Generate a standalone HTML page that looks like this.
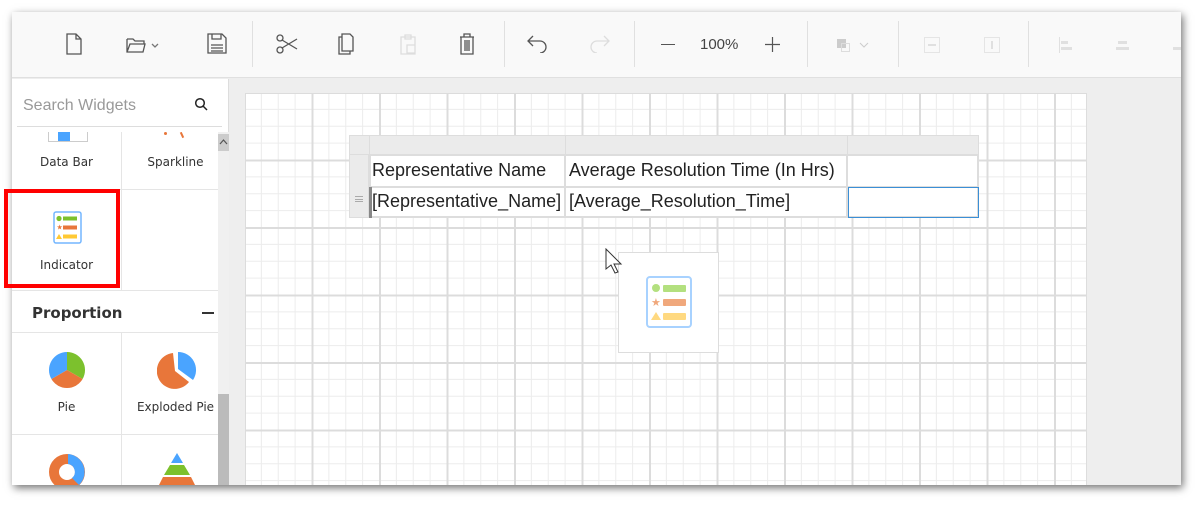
<!DOCTYPE html>
<html><head><meta charset="utf-8"><style>
*{margin:0;padding:0;box-sizing:border-box}
body{width:1201px;height:505px;background:#fff;position:relative;overflow:hidden;font-family:"Liberation Sans",sans-serif}
.app{position:absolute;left:12px;top:12px;width:1169px;height:473px;background:#eee;box-shadow:2px 3px 8px rgba(0,0,0,.55);overflow:hidden}
.tb{position:absolute;left:0;top:0;width:1169px;height:66px;background:#f9f9f9;border-bottom:1px solid #e0e0e0}
.sep{position:absolute;top:9px;width:1px;height:46px;background:#e0e0e0}
.ic{position:absolute;top:21px}
.side{position:absolute;left:0;top:67px;width:217px;height:406px;background:#fff;border-right:1px solid #ddd}
.page{position:absolute;left:233px;top:81px;width:842px;height:400px;background-color:#fff;
background-image:linear-gradient(90deg,#dcdcdc 2px,transparent 2px),linear-gradient(#dcdcdc 2px,transparent 2px),linear-gradient(90deg,#ececec 1px,transparent 1px),linear-gradient(#ececec 1px,transparent 1px);
background-size:67.5px 67.5px,67.5px 67.5px,16.875px 16.875px,16.875px 16.875px;background-position:-1px -1px;border-right:1px solid #ddd}
.cell{position:absolute;font-size:18px;color:#222;line-height:30px;padding-left:4px;white-space:nowrap}
.lbl{position:absolute;color:#333;text-align:center;width:109px;font-family:"DejaVu Sans",sans-serif;font-size:12px}
.hl{position:absolute;background:#e5e5e5}
</style></head><body>
<div class="app">
<div class="tb">
<svg class="ic" style="left:53px" width="18" height="22" viewBox="0 0 18 22" fill="none" stroke="#555" stroke-width="1.3"><path d="M2 1h9l5 5v15H2z M11 1v5h5"/></svg>
<svg class="ic" style="left:114px;top:24px" width="36" height="18" viewBox="0 0 36 18" fill="none" stroke="#555" stroke-width="1.3"><path d="M1 3h6l2 2h9v3 M1 3v13h16l2-8H4l-3 8"/><path d="M26 8l3 3 3-3" stroke="#777"/></svg>
<svg class="ic" style="left:195px" width="20" height="21" viewBox="0 0 20 21" fill="none" stroke="#555" stroke-width="1.3"><path d="M1 1h14l4 4v15H1z M5 1v5h9V1 M4 12h12 M4 15h12 M4 18h12"/></svg>
<div class="sep" style="left:240px"></div>
<svg class="ic" style="left:264px;top:22px" width="22" height="20" viewBox="0 0 22 20" fill="none" stroke="#555" stroke-width="1.3"><circle cx="4" cy="4" r="3"/><circle cx="4" cy="16" r="3"/><path d="M6 6l15 9 M6 14l15-9"/></svg>
<svg class="ic" style="left:325px" width="18" height="22" viewBox="0 0 18 22" fill="none" stroke="#555" stroke-width="1.3"><path d="M5 1h8l3 3v14H5z M5 4H2v17h11v-3"/></svg>
<svg class="ic" style="left:386px" width="20" height="22" viewBox="0 0 20 22" fill="none" stroke="#ddd" stroke-width="1.3"><path d="M3 4h14v17H3z M7 2h6v4H7z M9 12h8v8H9z"/></svg>
<svg class="ic" style="left:447px" width="16" height="22" viewBox="0 0 16 22" fill="none" stroke="#555" stroke-width="1.3"><path d="M1 4h14 M5 4V1h6v3 M2 4v17h12V4 M6 7v11 M8 7v11 M10 7v11"/></svg>
<div class="sep" style="left:492px"></div>
<svg class="ic" style="left:515px;top:23px" width="22" height="18" viewBox="0 0 22 18" fill="none" stroke="#555" stroke-width="1.3"><path d="M6 1L1 6l5 5 M1 6h12a6 6 0 0 1 0 12"/></svg>
<svg class="ic" style="left:576px;top:23px" width="22" height="18" viewBox="0 0 22 18" fill="none" stroke="#ddd" stroke-width="1.3"><path d="M16 1l5 5-5 5 M21 6H9a6 6 0 0 0 0 12"/></svg>
<div class="sep" style="left:622px"></div>
<div style="position:absolute;left:649px;top:32px;width:14px;height:1px;background:#555"></div>
<div style="position:absolute;left:688px;top:24px;font-size:15px;color:#444">100%</div>
<svg class="ic" style="left:753px;top:25px" width="15" height="15" viewBox="0 0 15 15" stroke="#555" stroke-width="1.2"><path d="M7.5 0v15 M0 7.5h15"/></svg>
<div class="sep" style="left:795px"></div>
<div style="position:absolute;left:825px;top:27px;width:9px;height:9px;background:#ccc"></div>
<div style="position:absolute;left:829px;top:31px;width:9px;height:9px;border:1px solid #ddd"></div>
<svg class="ic" style="left:847px;top:30px" width="10" height="6" viewBox="0 0 10 6" fill="none" stroke="#ccc"><path d="M1 1l4 4 4-4"/></svg>
<div class="sep" style="left:886px"></div>
<div style="position:absolute;left:912px;top:25px;width:16px;height:16px;border:1px solid #e5e5e5"><div style="position:absolute;left:3px;top:6px;width:8px;height:2px;background:#e0e0e0"></div></div>
<div style="position:absolute;left:972px;top:25px;width:16px;height:16px;border:1px solid #e5e5e5"><div style="position:absolute;left:6px;top:3px;width:2px;height:8px;background:#e0e0e0"></div></div>
<div class="sep" style="left:1016px"></div>
<div style="position:absolute;left:1047px;top:25px;width:1px;height:16px;background:#e0e0e0"></div>
<div style="position:absolute;left:1049px;top:29px;width:7px;height:3px;background:#e0e0e0"></div>
<div style="position:absolute;left:1049px;top:35px;width:11px;height:3px;background:#e0e0e0"></div>
<div style="position:absolute;left:1106px;top:29px;width:9px;height:3px;background:#e0e0e0"></div>
<div style="position:absolute;left:1104px;top:35px;width:13px;height:3px;background:#e0e0e0"></div>
<div style="position:absolute;left:1161px;top:35px;width:8px;height:3px;background:#e0e0e0"></div>
</div>
<div class="side">
<div style="position:absolute;left:11px;top:18px;font-size:16px;color:#999">Search Widgets</div>
<svg style="position:absolute;left:182px;top:18px" width="14" height="14" viewBox="0 0 14 14" fill="none" stroke="#222" stroke-width="1.5"><circle cx="6" cy="6" r="4.3"/><path d="M9 9l4 4"/></svg>
<div style="position:absolute;left:5px;top:47px;width:205px;height:1px;background:#ddd"></div>
<div style="position:absolute;left:0;top:53px;width:206px;height:353px;overflow:hidden">
 <div class="hl" style="left:109px;top:0;width:1px;height:158px"></div>
 <div style="position:absolute;left:36px;top:0;width:40px;height:10px;border:1px solid #ccc;border-top:none"><div style="position:absolute;left:9px;top:-1px;width:12px;height:10px;background:#4aa4ff"></div></div>
 <div class="lbl" style="left:0;top:23px">Data Bar</div>
 <div style="position:absolute;left:152px;top:0;width:3px;height:3px;background:#e8763a;border-radius:2px"></div>
 <div style="position:absolute;left:169px;top:0;width:2px;height:6px;background:#e8763a;transform:rotate(-25deg)"></div>
 <div class="lbl" style="left:109px;top:23px">Sparkline</div>
 <div class="hl" style="left:0;top:57px;width:206px;height:1px"></div>
 <svg style="position:absolute;left:41px;top:79px" width="29" height="33" viewBox="0 0 29 33"><rect x="1" y="1" width="27" height="31" rx="2" fill="#fff" stroke="#73b6ff" stroke-width="1.5"/><circle cx="6" cy="7.5" r="2.6" fill="#7cc12d"/><rect x="10" y="5.5" width="14" height="4" fill="#7cc12d"/><text x="3.5" y="18.5" font-size="7" fill="#e8763a">★</text><rect x="10" y="14.5" width="14" height="4" fill="#e8763a"/><path d="M3 28l3-5 3 5z" fill="#ffc933"/><rect x="10" y="23.5" width="14" height="4" fill="#ffc933"/></svg>
 <div class="lbl" style="left:0;top:126px">Indicator</div>
 <div class="hl" style="left:0;top:158px;width:206px;height:1px"></div>
 <div style="position:absolute;left:20px;top:172px;font-size:15px;font-weight:bold;color:#333;font-family:'DejaVu Sans',sans-serif">Proportion</div>
 <div style="position:absolute;left:190px;top:180px;width:12px;height:2px;background:#333"></div>
 <div class="hl" style="left:0;top:200px;width:206px;height:1px"></div>
 <div class="hl" style="left:109px;top:200px;width:1px;height:160px"></div>
 <svg style="position:absolute;left:36px;top:219px" width="38" height="38" viewBox="-19 -19 38 38"><path d="M0 0V-18A18 18 0 0 1 15.6 9z" fill="#7cc12d"/><path d="M0 0L15.6 9A18 18 0 0 1 -15.6 9z" fill="#e8763a"/><path d="M0 0L-15.6 9A18 18 0 0 1 0 -18z" fill="#4aa4ff"/></svg>
 <div class="lbl" style="left:0;top:268px">Pie</div>
 <svg style="position:absolute;left:145px;top:219px" width="40" height="38" viewBox="-19 -19 40 38"><path d="M0 0L-2 -18A18 18 0 1 0 14 11z" transform="translate(-1,1)" fill="#e8763a"/><path d="M2 -1V-18A18 18 0 0 1 17 10z" fill="#4aa4ff"/></svg>
 <div class="lbl" style="left:109px;top:268px">Exploded Pie</div>
 <div class="hl" style="left:0;top:302px;width:206px;height:1px"></div>
 <svg style="position:absolute;left:36px;top:321px" width="38" height="38" viewBox="-19 -19 38 38"><circle r="13" fill="none" stroke="#e8763a" stroke-width="10"/><path d="M1 -18A18 18 0 0 1 12 13L5 6A8 8 0 0 0 1 -8z" fill="#4aa4ff"/></svg>
 <svg style="position:absolute;left:145px;top:321px" width="40" height="38" viewBox="0 0 40 38"><path d="M20 0l6 10H14z" fill="#4aa4ff"/><path d="M13 12h14l6 10H7z" fill="#7cc12d"/><path d="M6 24h28l6 12H0z" fill="#e8763a"/></svg>
</div>
<div style="position:absolute;left:206px;top:53px;width:11px;height:353px;background:#f0f0f0"></div>
<div style="position:absolute;left:206px;top:55px;width:11px;height:17px;background:#ccc"></div>
<svg style="position:absolute;left:207px;top:60px" width="9" height="6" viewBox="0 0 9 6" fill="none" stroke="#555" stroke-width="1.2"><path d="M1 5l3.5-4L8 5"/></svg>
<div style="position:absolute;left:206px;top:315px;width:11px;height:91px;background:#bbb"></div>
</div>
<div class="page"></div>
<div style="position:absolute;left:337px;top:123px;width:630px;height:20px;background:#ebebeb;border:1px solid #ddd"></div>
<div style="position:absolute;left:357px;top:123px;width:1px;height:20px;background:#ddd"></div>
<div style="position:absolute;left:553px;top:123px;width:1px;height:20px;background:#ddd"></div>
<div style="position:absolute;left:835px;top:123px;width:1px;height:20px;background:#ddd"></div>
<div style="position:absolute;left:337px;top:142px;width:20px;height:64px;background:#ebebeb;border:1px solid #ddd"></div>
<div style="position:absolute;left:343px;top:184px;width:8px;height:6px;border-top:1px solid #aaa;border-bottom:1px solid #aaa"><div style="margin-top:1.5px;height:1px;background:#aaa"></div></div>
<div style="position:absolute;left:357px;top:142px;width:610px;height:64px;border:2px solid #ddd;background:#fff"></div>
<div style="position:absolute;left:357px;top:174px;width:610px;height:2px;background:#ddd"></div>
<div style="position:absolute;left:552px;top:142px;width:2px;height:64px;background:#ddd"></div>
<div style="position:absolute;left:834px;top:142px;width:2px;height:64px;background:#ddd"></div>
<div class="cell" style="left:356px;top:143px">Representative Name</div>
<div class="cell" style="left:553px;top:143px">Average Resolution Time (In Hrs)</div>
<div class="cell" style="left:356px;top:174px">[Representative_Name]</div>
<div class="cell" style="left:553px;top:174px">[Average_Resolution_Time]</div>
<div style="position:absolute;left:357px;top:175px;width:3px;height:31px;background:#888"></div>
<div style="position:absolute;left:836px;top:175px;width:131px;height:31px;border:1px solid #3b8fd6"></div>
<div style="position:absolute;left:606px;top:240px;width:101px;height:101px;background:#fff;border:1px solid #ddd"></div>
<svg style="position:absolute;left:634px;top:264px" width="46" height="52" viewBox="0 0 46 52"><rect x="1" y="1" width="44" height="50" rx="3" fill="#fff" stroke="#a8d2ff" stroke-width="2"/><circle cx="10" cy="12" r="4" fill="#b3e07f"/><rect x="17" y="9" width="23" height="7" rx="1" fill="#b3e07f"/><text x="5" y="30" font-size="11" fill="#f0a87c">★</text><rect x="17" y="23" width="23" height="7" rx="1" fill="#f0a87c"/><path d="M5 44l5-8 5 8z" fill="#ffd980"/><rect x="17" y="37" width="23" height="7" rx="1" fill="#ffd980"/></svg>
<svg style="position:absolute;left:593px;top:236px" width="19" height="27" viewBox="0 0 19 27"><path d="M1 1v20l5-4 4 8 3-1-4-8h7z" fill="#fff" stroke="#333" stroke-width="1"/></svg>
</div>
<div style="position:absolute;left:4px;top:189px;width:116px;height:99px;border:4px solid #f00"></div>
</body></html>
